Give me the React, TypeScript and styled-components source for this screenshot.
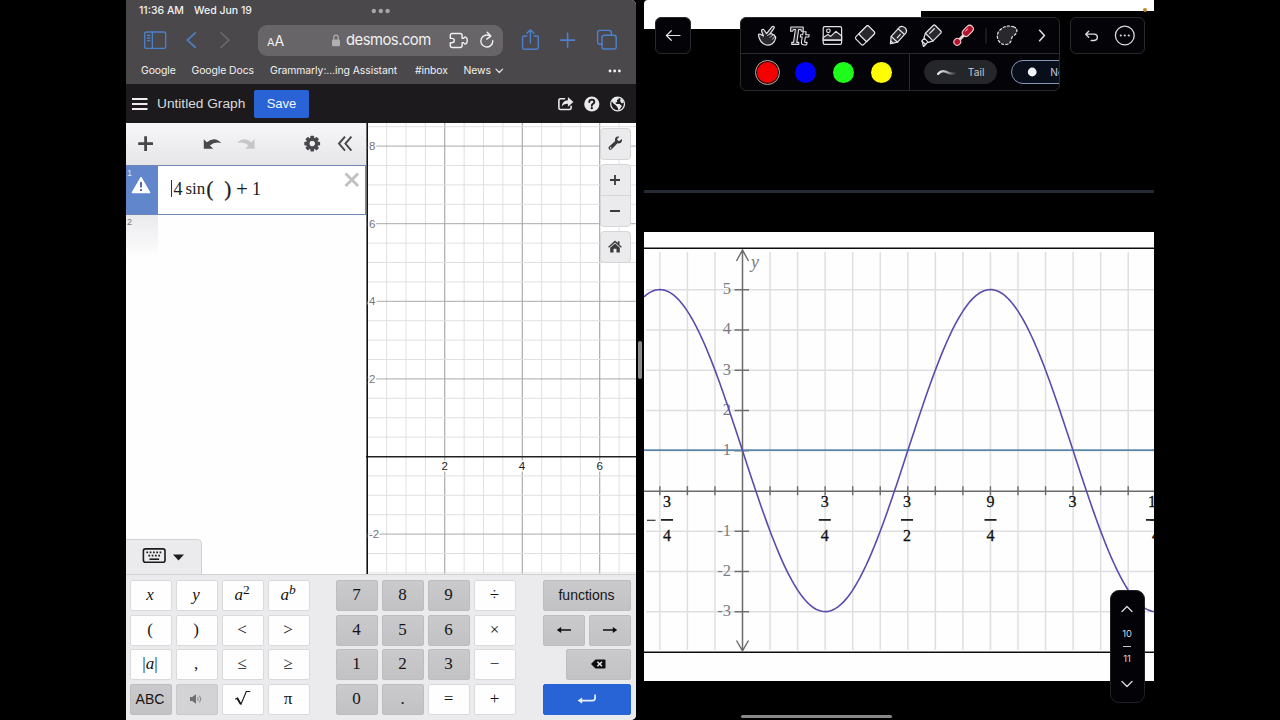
import React from "react";
import styled, { createGlobalStyle, css } from "styled-components";

const Global = createGlobalStyle`
  * { box-sizing: border-box; }
  html, body { margin: 0; background: #000; overflow: hidden; }
  svg { display: block; flex: none; }
`;

const UI = `Inter, "Liberation Sans", sans-serif`;
const SANS = `"Liberation Sans", Arial, sans-serif`;
const MATH = `"Liberation Serif", "Times New Roman", serif`;
const BLUE = "#4d80cc";

const Screen = styled.main`
  width: 1280px;
  height: 720px;
  display: flex;
  justify-content: center;
  background: #000;
  font-family: ${UI};
`;

/* ---------- left pane: browser ---------- */
const Browser = styled.section`
  width: 510px;
  height: 720px;
  display: flex;
  flex-direction: column;
  overflow: hidden;
  border-radius: 0 5px 5px 0;
  background: #fff;
`;
const Chrome = styled.header`
  height: 84px;
  flex: none;
  background: #4a484b;
  color: #f1f1f2;
`;
const StatusRow = styled.div`
  height: 21px;
  display: flex;
  align-items: center;
  padding-left: 13px;
  font-size: 10.5px;
  font-weight: 500;
  white-space: nowrap;
`;
const StatusText = styled.span<{ $w: number }>`
  width: ${(p) => p.$w}px;
`;
const NavRow = styled.div`
  height: 38px;
  display: flex;
  align-items: center;
`;
const AddressBar = styled.div`
  width: 245px;
  height: 31px;
  display: flex;
  align-items: center;
  border-radius: 9px;
  background: #676568;
  white-space: nowrap;
`;
const TextSize = styled.span`
  width: 74px;
  padding-left: 9px;
  font-size: 14px;
  small { font-size: 11px; }
`;
const Domain = styled.span`
  width: 103px;
  padding-left: 6px;
  font-size: 14.8px;
  letter-spacing: -0.5px;
`;
const Bookmarks = styled.nav`
  height: 23px;
  display: flex;
  align-items: center;
  padding-left: 15px;
  font-size: 10.4px;
  letter-spacing: -0.07px;
  white-space: nowrap;
`;
const Bookmark = styled.span<{ $w: number }>`
  width: ${(p) => p.$w}px;
`;
const MoreDots = styled.svg`
  margin-left: 104px;
`;

const AppBar = styled.div`
  height: 39px;
  flex: none;
  display: flex;
  align-items: center;
  padding-left: 6px;
  background: #1c1a1d;
  color: #dadadb;
  font-family: ${SANS};
`;
const DocTitle = styled.span`
  width: 97px;
  flex: none;
  margin-left: 9px;
  font-size: 13.7px;
  white-space: nowrap;
`;
const SaveButton = styled.button`
  width: 55px;
  height: 28px;
  flex: none;
  padding: 0;
  border: 0;
  border-radius: 2px;
  background: #2a63d6;
  color: #f4f7ff;
  font: 13px ${SANS};
`;

const Workspace = styled.div`
  height: 451px;
  flex: none;
  display: flex;
`;
const ExpressionPanel = styled.div`
  width: 240px;
  display: flex;
  flex-direction: column;
  background: #fefefe;
`;
const PanelTools = styled.div`
  height: 42px;
  flex: none;
  background: linear-gradient(#f7f6f8, #e6e5e8);
`;
const ExpressionRow = styled.div`
  height: 50px;
  flex: none;
  display: flex;
  border: 1px solid #6d88b4;
  border-left: 0;
  background: #fff;
`;
const RowTab = styled.div<{ $active?: boolean }>`
  width: 32px;
  flex: none;
  padding: 2px 1px;
  font: 9px/10px ${SANS};
  color: ${(p) => (p.$active ? "#dbe6fb" : "#77767a")};
  background: ${(p) => (p.$active ? "#6186cb" : "linear-gradient(#eae9ec, #fefefe)")};
  ${(p) => !p.$active && css`height: 42px;`}
  svg { margin: -2px 0 0 4px; }
`;
const Formula = styled.div`
  flex: 1;
  display: flex;
  align-items: center;
  padding: 0 0 3px 13px;
  font: 18.5px/20px ${MATH};
  color: #1c1c1e;
`;
const Glyph = styled.span<{ $w: number; $size?: number }>`
  width: ${(p) => p.$w}px;
  flex: none;
  font-size: ${(p) => p.$size ?? 18}px;
  white-space: nowrap;
`;
const Paren = styled(Glyph)`
  -webkit-text-stroke: 0.4px #1c1c1e;
`;
const Caret = styled.i`
  width: 1px;
  height: 17px;
  margin-right: 1.5px;
  background: #333;
`;
const DeleteMark = styled.svg`
  margin-top: -17px;
`;
const Spacer = styled.div`
  flex: 1;
`;
const KeypadTab = styled.div`
  width: 76px;
  height: 35px;
  flex: none;
  border: 1px solid #d2d1d4;
  border-width: 1px 1px 0 0;
  border-radius: 0 5px 0 0;
  background: #ebeaed;
`;
const GraphArea = styled.div`
  position: relative;
  width: 270px;
  overflow: hidden;
  background: #fff;
`;
const GraphControls = styled.div`
  position: absolute;
  top: 4.5px;
  right: 5px;
  width: 31.5px;
  display: flex;
  flex-direction: column;
  gap: 4px;
`;
const ControlGroup = styled.div`
  display: flex;
  flex-direction: column;
  border: 1px solid #d6d5d8;
  border-radius: 4px;
  background: #ebeaed;
`;
const Control = styled.div`
  height: 30px;
  display: flex;
  align-items: center;
  justify-content: center;
  & + & { border-top: 1px solid #d6d5d8; height: 31px; }
`;

const Keypad = styled.div`
  height: 146px;
  flex: none;
  display: flex;
  padding: 5px 0 0 3.5px;
  border-top: 1px solid #d2d1d4;
  background: #ebeaed;
`;
const KeyGrid = styled.div<{ $cols: number; $after?: number }>`
  display: grid;
  grid-template-columns: repeat(${(p) => p.$cols}, 42px);
  grid-auto-rows: 31px;
  gap: 3.6px 4px;
  margin-right: ${(p) => p.$after ?? 0}px;
  align-content: start;
`;
const Key = styled.button<{ $tone?: "light" | "dark" | "mid" | "blue"; $sans?: boolean; $wide?: boolean; $italic?: boolean }>`
  display: flex;
  align-items: center;
  justify-content: center;
  padding: 0 1px 1px 0;
  border: 1px solid #dad9dc;
  border-radius: 2px;
  background: #fefefe;
  color: #151516;
  font: 17px ${MATH};
  font-style: ${(p) => (p.$italic ? "italic" : "normal")};
  white-space: nowrap;
  ${(p) => p.$tone === "dark" && css`background: linear-gradient(#cac9cb, #c2c1c4); border-color: #bdbcbf;`}
  ${(p) => p.$tone === "mid" && css`background: #d3d2d5; border-color: #cac9cc;`}
  ${(p) => p.$tone === "blue" && css`background: #2864d5; border-color: #2864d5;`}
  ${(p) => p.$sans && css`font: 14px ${SANS};`}
  ${(p) => p.$wide && css`grid-column: 1 / -1;`}
  sup { font-size: 13.5px; line-height: 0; vertical-align: 6px; }
`;
const Upright = styled.sup`
  font-style: normal;
`;
const Backspace = styled(Key)`
  grid-column: 1 / -1;
  margin-left: 23px;
`;

/* ---------- split divider ---------- */
const Divider = styled.div`
  width: 8px;
  display: flex;
  align-items: center;
  justify-content: center;
`;
const Handle = styled.i`
  width: 4px;
  height: 38px;
  border-radius: 2px;
  background: #89898b;
`;

/* ---------- right pane: notes ---------- */
const Notes = styled.section`
  position: relative;
  width: 510px;
  height: 720px;
  display: flex;
  flex-direction: column;
  overflow: hidden;
  background: #000;
`;
const PageTop = styled.div`
  height: 190px;
  flex: none;
  display: flex;
  align-items: flex-start;
`;
const Paper = styled.div<{ $w: number; $h: number; $round?: boolean }>`
  width: ${(p) => p.$w}px;
  height: ${(p) => p.$h}px;
  background: #fff;
  border-radius: ${(p) => (p.$round ? "4px 0 0 0" : "0")};
`;
const PageEdge = styled.div`
  height: 3px;
  flex: none;
  margin-bottom: 39px;
  background: #262a34;
`;
const Sheet = styled.div`
  height: 449px;
  flex: none;
  background: #fefefe;
`;
const HomeBar = styled.div`
  width: 151px;
  height: 3px;
  margin: 33.5px 0 0 97px;
  border-radius: 2px;
  background: #88888a;
`;
const Floating = styled.div`
  position: absolute;
  top: 17px;
  left: 11px;
  display: flex;
  align-items: flex-start;
`;
const Panel = styled.div<{ $w: number; $h: number; $ml?: number }>`
  width: ${(p) => p.$w}px;
  height: ${(p) => p.$h}px;
  margin-left: ${(p) => p.$ml ?? 0}px;
  display: flex;
  flex-direction: column;
  overflow: hidden;
  border: 1px solid #29292c;
  border-radius: 6px;
  background: #040408;
`;
const ToolRow = styled.div`
  height: 36px;
  flex: none;
  border-bottom: 1px solid #2a2a2d;
`;
const ColorRow = styled.div`
  height: 36px;
  display: flex;
  align-items: center;
  padding-left: 14px;
`;
const Swatch = styled.i<{ $c: string; $on?: boolean }>`
  width: 21px;
  height: 21px;
  flex: none;
  margin-right: 16.9px;
  border-radius: 50%;
  background: ${(p) => p.$c};
  ${(p) => p.$on && css`
    width: 25px;
    height: 25px;
    margin-right: 15.2px;
    border: 1px solid #c9a8a2;
    background: radial-gradient(circle, ${p.$c} 9.9px, #16060a 10.7px);
  `}
`;
const Styles = styled.div`
  height: 36px;
  display: flex;
  align-items: center;
  padding-left: 14px;
  border-left: 1px solid #2a2a2d;
  white-space: nowrap;
`;
const Pill = styled.div<{ $on?: boolean }>`
  width: ${(p) => (p.$on ? 90 : 73)}px;
  height: 24px;
  flex: none;
  display: flex;
  align-items: center;
  margin-right: 14px;
  border-radius: 12px;
  border: 1px solid ${(p) => (p.$on ? "#8796b4" : "#25262a")};
  background: ${(p) => (p.$on ? "#090e1b" : "#25262a")};
  color: #c9c9cd;
  font-size: 10.2px;
`;
const MicDot = styled.i`
  position: absolute;
  top: 8px;
  right: 7px;
  width: 4px;
  height: 4px;
  border-radius: 50%;
  background: #c08a2c;
`;
const Pager = styled.div`
  position: absolute;
  left: 466px;
  top: 590px;
  width: 35px;
  height: 113px;
  display: flex;
  flex-direction: column;
  align-items: center;
  justify-content: space-between;
  padding: 14px 1px 14px 0;
  border: 1px solid #222226;
  border-radius: 9px;
  background: #030307;
  color: #d8d8da;
  font-size: 9.4px;
  line-height: 12px;
`;
const PageCount = styled.div`
  display: flex;
  flex-direction: column;
  align-items: center;
  gap: 6px;
  margin-top: -1px;
`;
const Bar = styled.i`
  width: 8px;
  height: 1px;
  background: #c8c8ca;
`;

const line = (stroke: string, strokeWidth = 1.4) => ({
  fill: "none",
  stroke,
  strokeWidth,
  strokeLinecap: "round" as const,
  strokeLinejoin: "round" as const,
});

/* Each icon strip keeps the coordinate system of the whole screen through its viewBox. */
const Strip = ({ x, y, w, h, children }: { x: number; y: number; w: number; h: number; children: React.ReactNode }) => (
  <svg width={w} height={h} viewBox={`${x} ${y} ${w} ${h}`}>
    {children}
  </svg>
);

const NavLeft = () => (
  <Strip x={126} y={21} w={132} h={38}>
    <g {...line(BLUE, 1.3)}>
      <rect x="144.7" y="32" width="21" height="16.4" rx="2" />
      <path d="M152.4 32v16.4M147.4 35.4h2.6M147.4 38h2.6M147.4 40.6h2.6" />
      <path d="M195.3 32.8l-8 7.3 8 7.3" strokeWidth="1.7" />
    </g>
    <path d="M221 32.8l8 7.3-8 7.3" {...line("#69686b", 1.6)} />
  </Strip>
);

const NavRight = () => (
  <Strip x={503} y={21} w={133} h={38}>
    <g {...line(BLUE, 1.4)}>
      <path d="M526.8 36h-2.6q-1.6 0-1.6 1.6v10q0 1.7 1.6 1.7h12.5q1.6 0 1.6-1.7v-10q0-1.6-1.6-1.6h-2.6M530.4 43V30M526.9 33.3l3.5-3.5 3.5 3.5" />
      <path d="M567.6 33v14.2M560.5 40.1h14.2" strokeWidth="1.6" />
      <rect x="602" y="35.2" width="14.2" height="13.8" rx="2.2" />
      <path d="M602 44.2h-2q-2.4 0-2.4-2.4v-9q0-2.4 2.4-2.4h9q2.4 0 2.4 2.4v2.4" />
    </g>
  </Strip>
);

const AddressIcons = () => (
  <Strip x={443} y={24.5} w={60} h={31}>
    <path
      d="M450.3 37.9v-2.9q0-2 2-2h7.8q2 0 2 2v2.900h1.600q.5-1.600 1.800-1.300 1.700.4 1.700 3.400t-1.700 3.400q-1.300.3-1.800-1.300h-1.600v2.900q0 2-2 2h-7.8q-2 0-2-2v-2.800h1.500q2.500 0 2.500-2.150t-2.500-2.150z"
      {...line("#f0f0f1", 1.4)}
    />
    <path d="M490.6 35.9a6 6 0 1 0 2.2 4.4M487.2 31.8l3.6 3.8-4.1 3" {...line("#f0f0f1", 1.4)} />
  </Strip>
);

const HeaderIcons = () => (
  <Strip x={550} y={88} w={86} h={30}>
    <path d="M564.5 97.7h-4q-1.6 0-1.6 1.6v7.6q0 1.6 1.6 1.6h9q1.6 0 1.6-1.6v-1.6" {...line("#e9e9ea", 1.6)} />
    <path d="M561.6 106q.3-6.4 6.3-6.8v-3.3l5.5 5-5.5 4.9v-3.1q-4.2-.2-6.3 3.3z" fill="#e9e9ea" />
    <circle cx="591.8" cy="103" r="7.6" fill="#e9e9ea" />
    <path d="M589.3 101q.1-2.4 2.5-2.4 2.5.1 2.5 2.2 0 1.3-1.3 2-1.2.7-1.2 1.9" {...line("#1c1a1d", 1.9)} />
    <circle cx="591.8" cy="107.2" r="1.15" fill="#1c1a1d" />
    <circle cx="617.6" cy="103" r="6.9" {...line("#e9e9ea", 1.3)} />
    <path d="M612 98.5l3-2.3 3.3.1.6 1.8-2 1 .3 1.8-2 .9 1.3 1.2 3.2.1 2.2 1.9-1.5 2.2-1.8 2.3-1.2-3.5-1.9-2-2.3-1.8-1.4-2.3zM620.8 97.2l2.2 2.2.7 2.6-1.9.3-1.7-2z" fill="#e9e9ea" />
  </Strip>
);

const gearTeeth = [0, 45, 90, 135, 180, 225, 270, 315];

const PanelIcons = () => (
  <Strip x={126} y={123} w={240} h={42}>
    <path d="M145.6 136.3v14.8M138.2 143.7h14.8" stroke="#47464a" strokeWidth="2.8" />
    <path d="M203.8 139.2v9.6h9.4l-3.3-3.2q4.6-4.4 11.4-2.6-6.6-7.3-14.4-.7z" fill="#49484c" />
    <path d="M254.6 139.2v9.6h-9.4l3.3-3.2q-4.6-4.4-11.4-2.6 6.6-7.3 14.4-.7z" fill="#c6c5c8" />
    <g fill="#49484c">
      {gearTeeth.map((a) => (
        <rect key={a} x="310.3" y="135.7" width="3.8" height="5" rx=".8" transform={`rotate(${a} 312.2 143.6)`} />
      ))}
    </g>
    <circle cx="312.2" cy="143.6" r="4.4" fill="none" stroke="#49484c" strokeWidth="3.2" />
    <path d="M345 136.6l-6 7 6 7M351.4 136.6l-6 7 6 7" fill="none" stroke="#47464a" strokeWidth="1.9" />
  </Strip>
);

const minorX = Array.from({ length: 14 }, (_, i) => i + 1);
const minorY = Array.from({ length: 24 }, (_, i) => i - 6);

const Plane = () => (
  <svg width="270" height="451" viewBox="366 123 270 451">
    {minorX.map((i) => {
      const x = 367.3 + i * 19.37;
      return <path key={i} d={`M${x} 123V574`} stroke={i % 4 ? "#e0e0e1" : "#99999b"} strokeWidth="1" />;
    })}
    {minorY.map((i) => {
      const y = 456.5 - i * 19.4;
      return <path key={i} d={`M367 ${y}H636`} stroke={i % 4 ? "#e0e0e1" : "#a9a9ab"} strokeWidth="1" />;
    })}
    <path d="M366 456.8H636" stroke="#222" strokeWidth="1.4" />
    <path d="M367.2 123V574" stroke="#111" strokeWidth="1.6" />
    <g fontFamily={SANS} fontSize="11.5" fill="#777679" stroke="#fff" strokeWidth="3" paintOrder="stroke">
      <text x="369" y="150.2">8</text>
      <text x="369" y="227.7">6</text>
      <text x="369" y="305">4</text>
      <text x="369" y="382.5">2</text>
      <text x="369" y="537.8">-2</text>
    </g>
    <g fontFamily={SANS} fontSize="11.5" fill="#1b1b1c" stroke="#fff" strokeWidth="3" paintOrder="stroke" textAnchor="middle">
      <text x="444.7" y="470.4">2</text>
      <text x="522" y="470.4">4</text>
      <text x="599.6" y="470.4">6</text>
    </g>
  </svg>
);

const Wrench = () => (
  <svg width="15" height="15" viewBox="0 0 15 15">
    <path d="M13.9 3.1l-2.5 2-1.8-.5-.4-1.8 2.3-2.1Q8.8-.2 7.4 1.9q-.8 1.4-.2 3.1L1 10.8q-1 1.2 0 2.4t2.5.2l6-6.1q2 .5 3.4-.6 1.6-1.4 1-3.6z" fill="#3a393c" />
    <circle cx="2.7" cy="11.9" r=".8" fill="#ebeaed" />
  </svg>
);
const House = () => (
  <svg width="14" height="13" viewBox="0 0 14 13">
    <path d="M7 .6l2.8 2.5V1.3h1.7v3.4l2.3 2.1-.8.9L7 2.4 1 7.7l-.8-.9z" fill="#3a393c" />
    <path d="M2.2 7.8L7 3.6l4.8 4.2V12.4H8.5V8.8h-3v3.6H2.2z" fill="#3a393c" />
  </svg>
);

const G0 = { x: 742.5, y: 491, dx: 27.55, dy: 40.25 };
const wave = Array.from({ length: 256 }, (_, i) => {
  const x = 644 + i * 2;
  const y = 450.6 + 161 * Math.sin((2 * Math.PI * (x - G0.x)) / (12 * G0.dx));
  return `${i ? "L" : "M"}${x} ${y.toFixed(2)}`;
}).join("");

const Fraction = ({ x, top, bottom }: { x: number; top: string; bottom?: string }) => (
  <g fill="#111" textAnchor="middle" fontSize="16">
    <text x={x} y="507.4" stroke="#111" strokeWidth=".3">{top}</text>
    {bottom && <path d={`M${x - 6} 519.9H${x + 6}`} stroke="#222" strokeWidth="1.8" />}
    {bottom && <text x={x} y="541.3" stroke="#111" strokeWidth=".3">{bottom}</text>}
  </g>
);

const SineSheet = () => (
  <svg width="510" height="449" viewBox="644 232 510 449" fontFamily={MATH}>
    <g stroke="#dfdfe1" strokeWidth="1.5">
      {Array.from({ length: 18 }, (_, i) => i - 3).map((i) => (
        <path key={i} d={`M${G0.x + i * G0.dx} 252V650`} />
      ))}
      {[5, 4, 3, 2, 1, -1, -2, -3].map((j) => (
        <path key={j} d={`M646 ${G0.y - j * G0.dy}H1154`} />
      ))}
    </g>
    <path d="M644 248.2H1154M644 652.3H1154" stroke="#0c0c0d" strokeWidth="1.4" />
    <g stroke="#6b6a6c" strokeWidth="1.4" fill="none">
      <path d="M644 491.2H1154M742.5 249.5V651M736.5 261l6-11 6 11M736.5 640.5l6 10.3 6-10.3" />
      {Array.from({ length: 18 }, (_, i) => i - 3).filter((i) => i).map((i) => (
        <path key={i} d={`M${G0.x + i * G0.dx} 486.2v9`} />
      ))}
      {[5, 4, 3, 2, 1, -1, -2, -3].map((j) => (
        <path key={j} d={`M734.5 ${G0.y - j * G0.dy}h14.5`} />
      ))}
    </g>
    <g fill="#7c7b7e" fontSize="16.5" textAnchor="end">
      {[5, 4, 3, 2, 1, -1, -2, -3].map((j) => (
        <text key={j} x="731" y={G0.y - j * G0.dy + 4.4}>{j}</text>
      ))}
      <text x="759" y="267.5" fontStyle="italic" fontSize="18">y</text>
    </g>
    <path d="M644 450.2H1154" stroke="#5c88a8" strokeWidth="1.7" />
    <path d="M647 520.3h8.5" stroke="#333" strokeWidth="1.2" />
    <Fraction x={667} top="3" bottom="4" />
    <Fraction x={824.8} top="3" bottom="4" />
    <Fraction x={907} top="3" bottom="2" />
    <Fraction x={990.5} top="9" bottom="4" />
    <Fraction x={1072.5} top="3" />
    <Fraction x={1156} top="15" bottom="4" />
    <path d="M1146 519.9h8" stroke="#222" strokeWidth="1.8" />
    <path d={wave} fill="none" stroke="#594cab" strokeWidth="1.6" />
  </svg>
);

const TOOL = "#e4e4e6";
const ToolIcons = () => (
  <Strip x={741} y={18} w={318} h={35}>
    <g {...line(TOOL, 1.2)}>
      <path
        fill="#29292d"
        d="M762.2 29.600q1.100-.7 1.900.4l2.500 3.600 5.500-6.900q1-.8 1.800 0 .7.700 0 1.700l-3.900 5.500q1.700-.7 2.700.7 1.800-.2 2.100 1.500 1.300.6.700 2.400-.5 3.100-3.300 5.200-3.500 2.400-7.200.8-4.500-1.800-5.700-6.300-.9-2.700-.8-3.300.7-1.300 2.300-.4l2.600 1.500-1.800-4.700q-.2-1.100.6-1.700z"
      />
      <path d="M767.600 35.400l2.400-1.500M770.300 37.300l2.400-2.400M772.600 39.200l2.200-2.700" strokeWidth=".9" />
      <path fill="#29292d" d="M790.800 27h12.400v4.200h-1.900l-.5-1.700h-2.1l-1.9 12.900h2v2h-7v-2h1.7l1.9-12.9h-1.8l-1.1 1.700h-1.9z" strokeWidth="1.100" />
      <path fill="#08080b" d="M803.300 31.700h2.900l-.5 3h3.500l-.4 2.300h-3.400l-.8 4.500q0 1 1 .9h1.500l-.4 2.200q-5.800 1.300-5.300-2.600l.8-5h-1.900l.4-2.300h1.900z" strokeWidth="1.100" />
      <rect x="823.200" y="26.600" width="18.400" height="17.700" rx="1.600" />
      <path fill="#29292d" d="M823.200 37.400l4.700-3 2.800 2 5.300-5 5.600 4.600v4.100h-18.400z" />
      <path d="M823.200 40.200h18.400" />
      <circle cx="828.400" cy="30.800" r="1.800" />
      <g transform="rotate(-45 865 35.300)">
        <rect x="855.900" y="29.900" width="18.200" height="11" rx="1.800" />
        <path fill="#29292d" d="M861.500 29.900h10.800q1.800 0 1.800 1.800v7.400q0 1.800-1.800 1.800h-10.800z" />
      </g>
      <g transform="rotate(-48 898 35.300)">
        <path fill="#29292d" d="M886.600 35.300l6-4.300h12.900q2.800 1 2.800 4.300t-2.800 4.300h-12.900z" />
        <path d="M892.600 31v8.600M903 31v8.600M888.900 33.800v3M895.600 36.400h4.600" />
      </g>
      <g transform="rotate(-45 931 35.300)">
        <path fill="#29292d" d="M928.500 29.900h11q1.500 0 1.500 1.500v7.800q0 1.500-1.500 1.500h-11z" />
        <path d="M928.500 29.900l-4.300 2.200v6.400l4.300 2.200M924.200 32.700h-3.600v5.200h3.600M931.500 33h6.500" />
        <path d="M920.600 33l-2.800 4.900h2.800" />
      </g>
      <path d="M986 28.500v14.500" stroke="#313135" strokeWidth="1" />
      <path fill="#29292d" strokeDasharray="2.200 2.200" d="M1013.400 26.700q4.700 1.600 3.100 5.900-.7 1.900-2.900 3-1.700.9-2 3.300-.8 4.700-5.100 5.600-5.100.7-8-3.800-2.700-5.300.7-9.800 5.600-6.700 14.200-4.200z" />
      <path d="M1039.600 30.300l4.800 5.200-4.800 5.200" strokeWidth="1.500" />
    </g>
    <g transform="rotate(-46 963.400 35.400)">
      <rect x="963.500" y="31.800" width="12.500" height="7.200" rx="3.500" fill="#b3142b" stroke="#f1d9dc" strokeWidth="1.100" />
      <path d="M957.500 34.400h6v2.200h-6z" fill="#f0e0e2" stroke="#f0e0e2" strokeWidth=".8" />
      <circle cx="954.500" cy="35.500" r="3.400" fill="#b3142b" stroke="#f1c6cb" strokeWidth="1.100" />
      <path d="M967.500 34h4" stroke="#f49aa5" strokeWidth="1" />
    </g>
  </Strip>
);

type KeyDef = { label: React.ReactNode; italic?: boolean; tone?: "dark" | "mid"; sans?: boolean };
const Speaker = () => (
  <svg width="14" height="12" viewBox="0 0 14 12">
    <path d="M1 4h2.3L7 1.2v9.6L3.3 8H1z" fill="#6f6e71" />
    <path d="M8.6 4.2q1.3 1.8 0 3.6M10.5 2.7q2.6 3.3 0 6.6" fill="none" stroke="#858487" strokeWidth="1" />
  </svg>
);
const Root = () => (
  <svg width="17" height="17" viewBox="0 0 17 17">
    <path d="M1.2 9.3l2.4-1.3 3.4 6.3L12.300 1.500h4" fill="none" stroke="#151516" strokeWidth="1.1" />
    <path d="M3.200 8.400l3.400 5.700" stroke="#151516" strokeWidth="1.700" />
  </svg>
);
const letterKeys: KeyDef[] = [
  { label: "x", italic: true }, { label: "y", italic: true },
  { label: <span>a<Upright>2</Upright></span>, italic: true },
  { label: <span>a<sup>b</sup></span>, italic: true },
  { label: "(" }, { label: ")" }, { label: "<" }, { label: ">" },
  { label: <span>|<em>a</em>|</span> }, { label: "," }, { label: "≤" }, { label: "≥" },
  { label: "ABC", tone: "dark", sans: true }, { label: <Speaker />, tone: "mid" },
  { label: <Root /> }, { label: "π" },
];
const digits = (row: string): KeyDef[] => row.split("").map((label) => ({ label, tone: "dark" }));
const numberKeys: KeyDef[] = [
  ...digits("789"), { label: "÷" },
  ...digits("456"), { label: "×" },
  ...digits("123"), { label: "−" },
  ...digits("0."), { label: "=" }, { label: "+" },
];
const renderKeys = (keys: KeyDef[]) =>
  keys.map((k, i) => (
    <Key key={i} $tone={k.tone} $italic={k.italic} $sans={k.sans}>{k.label}</Key>
  ));

const Arrow = ({ flip }: { flip?: boolean }) => (
  <svg width="16" height="8" viewBox="0 0 16 8">
    <g transform={flip ? "matrix(-1 0 0 1 16 0)" : undefined}>
      <path d="M3 4h12" stroke="#0e0e0f" strokeWidth="1.7" />
      <path d="M.8 4l4.4-3.100v6.200z" fill="#0e0e0f" />
    </g>
  </svg>
);

export default function App() {
  return (
    <Screen>
      <Global />
      <Browser>
        <Chrome>
          <StatusRow>
            <StatusText $w={55}>11:36 AM</StatusText>
            <StatusText $w={176.5}>Wed Jun 19</StatusText>
            <svg width="20" height="6" viewBox="0 0 20 6" fill="#a5a4a7">
              <circle cx="2.8" cy="3" r="2.2" /><circle cx="9.8" cy="3" r="2.2" /><circle cx="16.6" cy="3" r="2.2" />
            </svg>
          </StatusRow>
          <NavRow>
            <NavLeft />
            <AddressBar>
              <TextSize><small>A</small>A</TextSize>
              <svg width="8" height="13" viewBox="0 0 8 13">
                <rect x="0" y="5.5" width="8" height="6.8" rx="1.2" fill="#b0afb2" />
                <path d="M1.8 6V3.4a2.2 2.2 0 0 1 4.4 0V6" fill="none" stroke="#b0afb2" strokeWidth="1.2" />
              </svg>
              <Domain>desmos.com</Domain>
              <AddressIcons />
            </AddressBar>
            <NavRight />
          </NavRow>
          <Bookmarks>
            <Bookmark $w={50.5}>Google</Bookmark>
            <Bookmark $w={78.5}>Google Docs</Bookmark>
            <Bookmark $w={145}>Grammarly:...ing Assistant</Bookmark>
            <Bookmark $w={48.5}>#inbox</Bookmark>
            <Bookmark $w={31}>News</Bookmark>
            <svg width="9" height="6" viewBox="0 0 9 6"><path d="M1 1.200l3.300 3.300 3.300-3.300" {...line("#e8e8ea", 1.2)} /></svg>
            <MoreDots width="14" height="4" viewBox="0 0 14 4" fill="#f1f1f2">
              <circle cx="2" cy="2" r="1.4" /><circle cx="6.7" cy="2" r="1.4" /><circle cx="11.4" cy="2" r="1.4" />
            </MoreDots>
          </Bookmarks>
        </Chrome>

        <AppBar>
          <svg width="16" height="14" viewBox="0 0 16 14"><path d="M0 2h15.500M0 7h15.500M0 12h15.500" stroke="#ededee" strokeWidth="2" /></svg>
          <DocTitle>Untitled Graph</DocTitle>
          <SaveButton>Save</SaveButton>
          <Spacer />
          <HeaderIcons />
        </AppBar>

        <Workspace>
          <ExpressionPanel>
            <PanelTools><PanelIcons /></PanelTools>
            <ExpressionRow>
              <RowTab $active>
                1
                <svg width="20" height="18" viewBox="0 0 20 18">
                  <path d="M10 1.600L18.600 16.600H1.400z" fill="#fff" stroke="#fff" strokeWidth="1.400" strokeLinejoin="round" />
                  <path d="M10 6v5.600M10 13v2" stroke="#54699b" strokeWidth="1.900" />
                </svg>
              </RowTab>
              <Formula>
                <Caret />
                <Glyph $w={12}>4</Glyph>
                <Glyph $w={21} $size={17}>sin</Glyph>
                <Paren $w={18} $size={20}>(</Paren>
                <Paren $w={11.5} $size={20}>)</Paren>
                <Glyph $w={16} $size={21}>+</Glyph>
                <Glyph $w={92}>1</Glyph>
                <DeleteMark width="16" height="16" viewBox="0 0 16 16"><path d="M1.500 1.500l12.600 12.600M14.100 1.500L1.500 14.100" stroke="#c0bfc2" strokeWidth="2.800" /></DeleteMark>
              </Formula>
            </ExpressionRow>
            <RowTab>2</RowTab>
            <Spacer />
            <KeypadTab>
              <Strip x={126} y={540} w={75} h={34}>
                <rect x="143.400" y="548.900" width="21.600" height="13.400" rx="2" fill="none" stroke="#1c1b1e" strokeWidth="1.600" />
                <path d="M146.400 552.300h16M148.400 555.600h12" stroke="#1c1b1e" strokeWidth="1.700" strokeDasharray="1.700 1.600" />
                <path d="M149.500 559.200h9.600" stroke="#1c1b1e" strokeWidth="1.600" />
                <path d="M173 554.500h11l-5.500 6z" fill="#1c1b1e" />
              </Strip>
            </KeypadTab>
          </ExpressionPanel>
          <GraphArea>
            <Plane />
            <GraphControls>
              <ControlGroup><Control><Wrench /></Control></ControlGroup>
              <ControlGroup>
                <Control><svg width="12" height="12" viewBox="0 0 12 12"><path d="M6 1v10M1 6h10" stroke="#3a393c" strokeWidth="1.800" /></svg></Control>
                <Control><svg width="12" height="12" viewBox="0 0 12 12"><path d="M1 6h10" stroke="#3a393c" strokeWidth="1.800" /></svg></Control>
              </ControlGroup>
              <ControlGroup><Control><House /></Control></ControlGroup>
            </GraphControls>
          </GraphArea>
        </Workspace>

        <Keypad>
          <KeyGrid $cols={4} $after={26.5}>{renderKeys(letterKeys)}</KeyGrid>
          <KeyGrid $cols={4} $after={27}>{renderKeys(numberKeys)}</KeyGrid>
          <KeyGrid $cols={2}>
            <Key $tone="dark" $sans $wide>functions</Key>
            <Key $tone="dark"><Arrow /></Key>
            <Key $tone="dark"><Arrow flip /></Key>
            <Backspace $tone="dark">
              <svg width="15" height="10" viewBox="0 0 15 10">
                <path d="M0 5l4.500-4.600h9q1 0 1 1v7.200q0 1-1 1h-9z" fill="#0e0e0f" />
                <path d="M6.400 2.700l4.600 4.600M11 2.700L6.400 7.300" stroke="#eee" strokeWidth="1.400" />
              </svg>
            </Backspace>
            <Key $tone="blue" $wide>
              <svg width="20" height="12" viewBox="0 0 20 12">
                <path d="M3 7.600h12.500q2.600 0 2.600-2.600V1.400" fill="none" stroke="#e8f0ff" strokeWidth="1.700" />
                <path d="M.6 7.600l4.600-3.200v6.400z" fill="#e8f0ff" />
              </svg>
            </Key>
          </KeyGrid>
        </Keypad>
      </Browser>

      <Divider><Handle /></Divider>

      <Notes>
        <PageTop>
          <Paper $w={277} $h={29} $round />
          <Paper $w={233} $h={11} />
        </PageTop>
        <PageEdge />
        <Sheet><SineSheet /></Sheet>
        <HomeBar />

        <Floating>
          <Panel $w={36} $h={37}>
            <svg width="34" height="35" viewBox="656 18 34 35"><path d="M680 35.500h-13.400M671.300 30.700l-4.900 4.800 4.900 4.800" {...line("#e4e4e6", 1.2)} /></svg>
          </Panel>
          <Panel $w={320} $h={74} $ml={49}>
            <ToolRow><ToolIcons /></ToolRow>
            <ColorRow>
              <Swatch $c="#f40000" $on />
              <Swatch $c="#0000fb" />
              <Swatch $c="#1dfc1a" />
              <Swatch $c="#fffd00" />
              <Styles>
                <Pill>
                  <svg width="43" height="22" viewBox="925 61 43 22">
                    <defs>
                      <linearGradient id="tail" x1="0" x2="1"><stop offset="0" stopColor="#e6e6ea" /><stop offset=".5" stopColor="#b0b0b5" /><stop offset="1" stopColor="#3a3b40" /></linearGradient>
                    </defs>
                    <path d="M938 74q3.500-4.500 8-2.200 4.500 2.600 9 1.500" fill="none" stroke="url(#tail)" strokeWidth="2.200" strokeLinecap="round" />
                  </svg>
                  Tail
                </Pill>
                <Pill $on>
                  <svg width="38.5" height="22" viewBox="1012 61 38.5 22"><circle cx="1032.200" cy="72" r="4.400" fill="#f2f3f7" /></svg>
                  No tail
                </Pill>
              </Styles>
            </ColorRow>
          </Panel>
          <Panel $w={75} $h={37} $ml={10}>
            <Strip x={1071} y={18} w={73} h={35}>
              <g {...line("#dcdcde", 1.3)}>
                <path d="M1088.700 31.200l-3 3 3 3M1085.900 34.200h8.300q3.200.3 3.200 3.100 0 3-3.200 3.200h-3" />
                <circle cx="1124.800" cy="35.500" r="9.400" />
              </g>
              <g fill="#dcdcde"><circle cx="1120.800" cy="35.500" r="1.100" /><circle cx="1124.800" cy="35.500" r="1.100" /><circle cx="1128.800" cy="35.500" r="1.100" /></g>
            </Strip>
          </Panel>
        </Floating>
        <MicDot />

        <Pager>
          <svg width="12" height="8" viewBox="0 0 12 8"><path d="M1 6.500l5-5 5 5" {...line("#dcdcde", 1.3)} /></svg>
          <PageCount><span>10</span><Bar /><span>11</span></PageCount>
          <svg width="12" height="8" viewBox="0 0 12 8"><path d="M1 1.500l5 5 5-5" {...line("#dcdcde", 1.3)} /></svg>
        </Pager>
      </Notes>
    </Screen>
  );
}
